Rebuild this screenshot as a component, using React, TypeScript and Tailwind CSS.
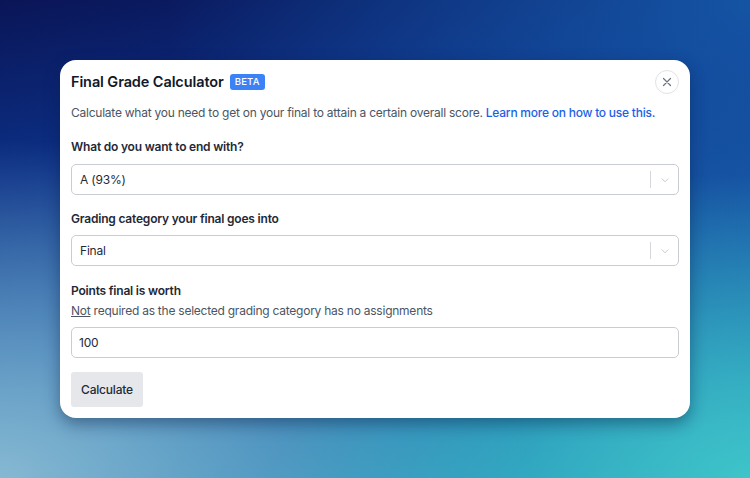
import React from 'react';

const ChevronDown = () => (
  <svg width="12" height="12" viewBox="0 0 20 20" fill="none" stroke="currentColor" strokeWidth="1.6" strokeLinecap="round" strokeLinejoin="round">
    <path d="M5 8l5 5 5-5" />
  </svg>
);

const SelectBox: React.FC<{ value: string }> = ({ value }) => (
  <div className="flex h-[31px] items-center rounded-[5px] border border-[#c9cdd3] bg-white">
    <span className="flex-1 pl-[8px] text-[12px] tracking-[-0.2px] text-[#1f2937]">{value}</span>
    <span className="h-[17px] w-px bg-[#d4d7dc]" />
    <span className="flex w-[27px] justify-center text-[#c4c8ce]">
      <ChevronDown />
    </span>
  </div>
);

export default function App() {
  return (
    <div
      className="h-[478px] w-[750px] overflow-hidden bg-[radial-gradient(ellipse_at_100%_100%,#3ec4c9_0%,rgba(62,196,201,0)_45%),radial-gradient(ellipse_at_0%_100%,#86b8d2_0%,rgba(134,184,210,0)_50%),radial-gradient(ellipse_at_100%_0%,rgba(22,88,168,0.9)_0%,rgba(22,88,168,0)_55%),linear-gradient(170deg,#0a1557_0%,#0c3187_30%,#1a5da8_60%,#2590ba_100%)] pt-[60px] pl-[60px]"
      style={{ fontFamily: 'Inter, "Noto Sans", sans-serif' }}
    >
      <div className="w-[630px] rounded-[16px] bg-white px-[11px] pt-[10px] pb-[11px] shadow-[0_6px_16px_rgba(8,30,70,0.45)]">
        {/* header */}
        <div className="flex h-[24px] items-center">
          <h1 className="text-[14.5px] font-semibold tracking-[-0.1px] text-[#111827]">Final Grade Calculator</h1>
          <span className="ml-[6px] rounded-[3px] bg-[#3b82f6] px-[5px] py-px text-[9.5px] font-medium leading-[14px] tracking-wide text-white">BETA</span>
          <button className="ml-auto flex h-[24px] w-[24px] items-center justify-center rounded-full border border-[#dfe2e6] text-[#6b7280]">
            <svg width="10" height="10" viewBox="0 0 10 10" stroke="currentColor" strokeWidth="1.2" strokeLinecap="round">
              <path d="M1.5 1.5l7 7M8.5 1.5l-7 7" />
            </svg>
          </button>
        </div>

        <p className="mt-[11px] text-[12px] leading-[16px] tracking-[-0.24px] text-[#4b5563]">
          Calculate what you need to get on your final to attain a certain overall score.{' '}
          <a className="font-medium text-[#1d5fe6]">Learn more on how to use this.</a>
        </p>

        <div className="mt-[18px] text-[12px] font-semibold leading-[16px] tracking-[-0.2px] text-[#1f2937]">What do you want to end with?</div>
        <div className="mt-[9px]">
          <SelectBox value="A (93%)" />
        </div>

        <div className="mt-[16px] text-[12px] font-semibold leading-[16px] tracking-[-0.2px] text-[#1f2937]">Grading category your final goes into</div>
        <div className="mt-[8px]">
          <SelectBox value="Final" />
        </div>

        <div className="mt-[17px] text-[12px] font-semibold leading-[16px] tracking-[-0.2px] text-[#1f2937]">Points final is worth</div>
        <div className="mt-[4px] text-[12px] leading-[16px] tracking-[-0.24px] text-[#4b5563]">
          <span className="underline">Not</span> required as the selected grading category has no assignments
        </div>
        <div className="mt-[8px] flex h-[31px] items-center rounded-[5px] border border-[#c9cdd3] pl-[7px] text-[12px] tracking-[-0.2px] text-[#1f2937]">
          100
        </div>

        <button className="mt-[14px] h-[35px] w-[72px] rounded-[3px] bg-[#e5e7eb] text-[12px] font-medium tracking-[-0.2px] text-[#1f2937]">
          Calculate
        </button>
      </div>
    </div>
  );
}
